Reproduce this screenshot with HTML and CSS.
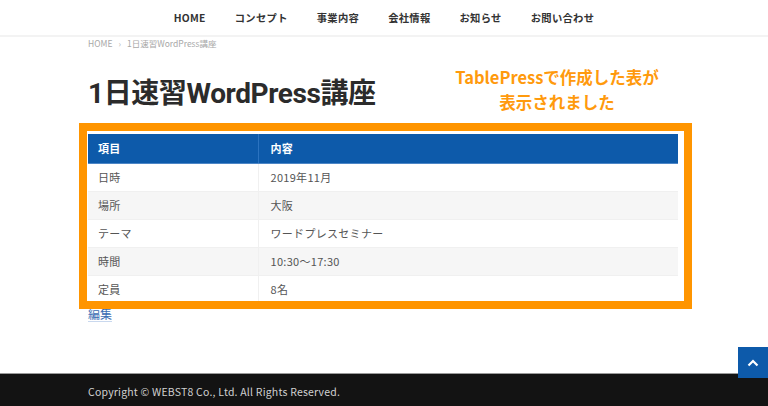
FILE: index.html
```html
<!DOCTYPE html>
<html lang="ja">
<head>
<meta charset="utf-8">
<title>1日速習WordPress講座</title>
<link rel="stylesheet" href="styles.css">
</head>
<body>
<header class="site-header">
  <nav class="gnav">
    <a href="#">HOME</a>
    <a href="#">コンセプト</a>
    <a href="#">事業内容</a>
    <a href="#">会社情報</a>
    <a href="#">お知らせ</a>
    <a href="#">お問い合わせ</a>
  </nav>
</header>
<main class="main">
  <div class="container">
    <div class="breadcrumb"><span>HOME</span><span class="sep">›</span><span>1日速習WordPress講座</span></div>
    <h1 class="title">1日速習WordPress講座</h1>
    <table class="tp">
      <thead>
        <tr><th class="c1">項目</th><th>内容</th></tr>
      </thead>
      <tbody>
        <tr><td class="c1">日時</td><td>2019年11月</td></tr>
        <tr class="even"><td class="c1">場所</td><td>大阪</td></tr>
        <tr><td class="c1">テーマ</td><td>ワードプレスセミナー</td></tr>
        <tr class="even"><td class="c1">時間</td><td>10:30〜17:30</td></tr>
        <tr><td class="c1">定員</td><td>8名</td></tr>
      </tbody>
    </table>
    <a class="edit" href="#">編集</a>
  </div>
  <div class="note">TablePressで作成した表が<br>表示されました</div>
  <div class="frame"></div>
</main>
<a class="totop" href="#" aria-label="page top">
  <svg width="12" height="8" viewBox="0 0 12 8"><path d="M1.5 6.5 L6 2 L10.5 6.5" fill="none" stroke="#fff" stroke-width="2.2"/></svg>
</a>
<footer class="site-footer">
  <div class="container">Copyright © WEBST8 Co., Ltd. All Rights Reserved.</div>
</footer>
</body>
</html>
```
FILE: styles.css
```css
* { box-sizing: border-box; }
html, body { margin: 0; padding: 0; }
body {
  font-family: "Noto Sans CJK JP", "Noto Sans", sans-serif;
  color: #333;
  background: #fff;
  width: 768px;
  height: 406px;
  overflow: hidden;
  position: relative;
}
a { text-decoration: none; color: inherit; }

.site-header {
  height: 37px;
  border-bottom: 2px solid #f3f3f3;
}
.gnav {
  display: flex;
  justify-content: center;
  align-items: center;
  gap: 29px;
  height: 35px;
}
.gnav a {
  font-size: 10.3px;
  font-weight: 700;
  color: #333;
  letter-spacing: 0.3px;
}

.main { position: relative; height: 337px; }
.container { margin-left: 88px; width: 590px; }

.breadcrumb {
  font-size: 8.5px;
  color: #a8a8a8;
  line-height: 12px;
  display: flex;
  gap: 6px;
}
.breadcrumb .sep { color: #b5b5b5; }

.title {
  margin: 25px 0 0;
  font-family: "Roboto", "Noto Sans CJK JP", sans-serif;
  font-size: 28px;
  font-weight: 700;
  line-height: 40px;
  color: #2b2b2b;
  letter-spacing: -0.4px;
}

.tp {
  margin-top: 20px;
  width: 590px;
  border-collapse: collapse;
  font-size: 11px;
  color: #555;
  letter-spacing: 0.3px;
}
.tp th, .tp td {
  text-align: left;
  padding: 0 10px;
  height: 28px;
}
.tp th {
  background: #0d5aaa;
  color: #fff;
  font-weight: 700;
  height: 29px;
  border-bottom: 1px solid #4d86c6;
}
.tp th.c1 { border-right: 1px solid #2b73c0; }
.tp td { border-top: 1px solid #f0f0f0; }
.tp td.c1 { border-right: 1px solid #f0f0f0; width: 170px; }
.tp tr.even td { background: #f6f6f6; }
.tp td:last-child { padding-left: 12px; }
.tp th:last-child { padding-left: 12px; }

.edit {
  display: block;
  width: fit-content;
  margin-top: 4px;
  font-size: 12px;
  line-height: 14px;
  color: #3b6db3;
  border-bottom: 1px solid #c9d8ee;
}

.note {
  position: absolute;
  left: 440px;
  top: 28px;
  width: 234px;
  text-align: center;
  color: #ff9a0d;
  font-size: 16.5px;
  font-weight: 700;
  line-height: 25px;
}
.frame {
  position: absolute;
  left: 79px;
  top: 86px;
  width: 613px;
  height: 186px;
  border: 8px solid #ff9500;
}

.totop {
  position: absolute;
  right: 0;
  top: 347px;
  width: 30px;
  height: 31px;
  background: #0d5aaa;
  display: flex;
  align-items: center;
  justify-content: center;
  z-index: 2;
}

.site-footer {
  position: absolute;
  left: 0;
  right: 0;
  top: 373px;
  height: 33px;
  background: #131313;
  border-top: 1px solid #9a9a9a;
  color: #d0d0d0;
  font-size: 10.5px;
  line-height: 36px;
  letter-spacing: 0.2px;
}
```
